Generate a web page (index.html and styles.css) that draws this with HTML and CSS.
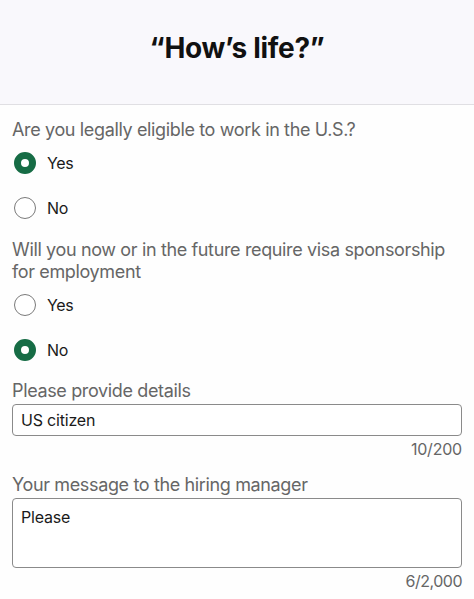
FILE: index.html
```html
<!DOCTYPE html>
<html lang="en">
<head>
<meta charset="utf-8">
<title>How's life?</title>
<link rel="stylesheet" href="styles.css">
</head>
<body>
<header class="header">
  <h1 class="title">“How’s life?”</h1>
</header>
<main class="form">
  <p class="question q1">Are you legally eligible to work in the U.S.?</p>
  <div class="options">
    <label class="option"><span class="radio checked"></span><span class="opt-label">Yes</span></label>
    <label class="option"><span class="radio"></span><span class="opt-label">No</span></label>
  </div>
  <p class="question q2">Will you now or in the future require visa sponsorship for employment</p>
  <div class="options">
    <label class="option"><span class="radio"></span><span class="opt-label">Yes</span></label>
    <label class="option"><span class="radio checked"></span><span class="opt-label">No</span></label>
  </div>
  <p class="question q3">Please provide details</p>
  <div class="field">US citizen</div>
  <div class="counter">10/200</div>
  <p class="question q4">Your message to the hiring manager</p>
  <div class="field area">Please</div>
  <div class="counter c2">6/2,000</div>
</main>
</body>
</html>
```
FILE: styles.css
```css
* { box-sizing: border-box; }
html, body { margin: 0; padding: 0; background: #fefefe; }
body {
  font-family: Inter, "Noto Sans", sans-serif;
  color: #1a1a1a;
  width: 474px;
  height: 599px;
  overflow: hidden;
}
.header {
  height: 105px;
  background: #f9f8fc;
  border-bottom: 1.5px solid #e0dfe3;
  display: flex;
  justify-content: center;
  padding-top: 31px;
}
.title {
  margin: 0;
  font-size: 28px;
  line-height: 34px;
  font-weight: 700;
  color: #111;
  letter-spacing: -0.3px;
}
.form {
  padding: 0 12px;
  display: flex;
  flex-direction: column;
}
.question {
  margin: 0;
  font-size: 18px;
  line-height: 22px;
  color: #666;
  letter-spacing: -0.36px;
}
.q1 { margin-top: 14px; }
.q2 { margin-top: 9px; }
.q3 { margin-top: 7.5px; }
.q4 { margin-top: 15.5px; }
.options {
  display: flex;
  flex-direction: column;
  gap: 1px;
}
.option {
  height: 44px;
  display: flex;
  align-items: center;
  gap: 11px;
  padding-left: 2px;
}
.radio {
  width: 22px;
  height: 22px;
  border-radius: 50%;
  border: 1.5px solid #7a7a7a;
  background: #fff;
  flex: none;
}
.radio.checked {
  border: 7px solid #166c45;
}
.opt-label {
  font-size: 16px;
  color: #1a1a1a;
  letter-spacing: -0.3px;
}
.field {
  margin-top: 2px;
  height: 32px;
  border: 1.5px solid #8a8a8a;
  border-radius: 4px;
  background: #fff;
  padding: 5px 0 0 8px;
  font-size: 16px;
  line-height: 20px;
  color: #1a1a1a;
  letter-spacing: -0.2px;
}
.field.area {
  height: 70px;
  padding-top: 8px;
}
.counter {
  margin-top: 3px;
  text-align: right;
  font-size: 16px;
  line-height: 20px;
  color: #666;
  letter-spacing: -0.2px;
}
.c2 { margin-top: 3px; letter-spacing: -0.5px; }
```
